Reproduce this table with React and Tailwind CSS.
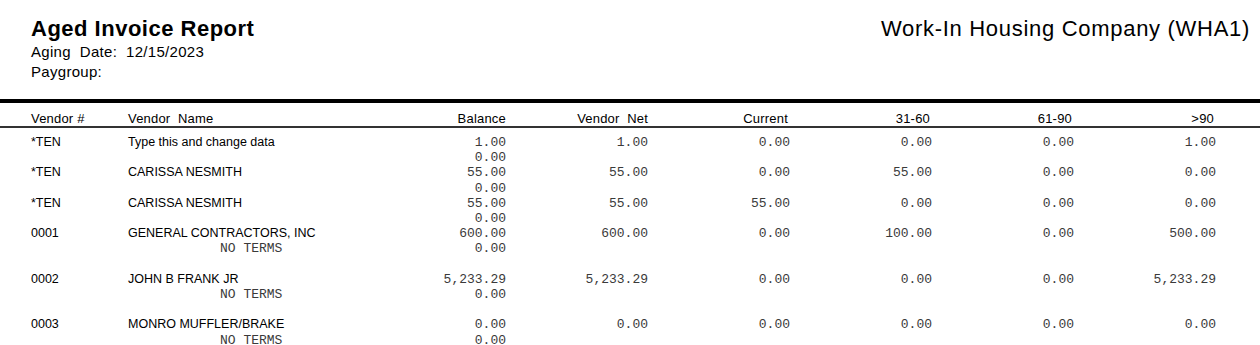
import React from "react";

const rows = [
    { id: "*TEN", name: "Type this and change data", terms: false, bal: "1.00", net: "1.00", cur: "0.00", d31: "0.00", d61: "0.00", d90: "1.00" },
    { id: "*TEN", name: "CARISSA NESMITH", terms: false, bal: "55.00", net: "55.00", cur: "0.00", d31: "55.00", d61: "0.00", d90: "0.00" },
    { id: "*TEN", name: "CARISSA NESMITH", terms: false, bal: "55.00", net: "55.00", cur: "55.00", d31: "0.00", d61: "0.00", d90: "0.00" },
    { id: "0001", name: "GENERAL CONTRACTORS, INC", terms: true, bal: "600.00", net: "600.00", cur: "0.00", d31: "100.00", d61: "0.00", d90: "500.00" },
    { id: "0002", name: "JOHN B FRANK JR", terms: true, bal: "5,233.29", net: "5,233.29", cur: "0.00", d31: "0.00", d61: "0.00", d90: "5,233.29" },
    { id: "0003", name: "MONRO MUFFLER/BRAKE", terms: true, bal: "0.00", net: "0.00", cur: "0.00", d31: "0.00", d61: "0.00", d90: "0.00" },
];

const cols = "grid grid-cols-[97px_250px_128px_142px_142px_142px_142px_142px] pl-[31px]";
const sans = "font-['Liberation_Sans',Arial,sans-serif]";
const mono = "font-['Liberation_Mono','Courier_New',monospace] text-[13px] text-[#3a3a3a] text-right";

const App = () => {
    return (
        <div className={`bg-white text-black min-h-screen w-[1260px] overflow-hidden ${sans}`}>

            {/* TITLE */}
            <div className="flex justify-between pt-[17px] pl-[31px] pr-[10px]">
                <div>
                    <h1 className="text-[22px] leading-[24px] font-bold tracking-[0.5px]">Aged Invoice Report</h1>
                    <p className="mt-[1px] text-[15px] leading-[20px] tracking-[0.3px] whitespace-pre">Aging  Date:  12/15/2023</p>
                    <p className="text-[15px] leading-[20px] tracking-[0.3px]">Paygroup:</p>
                </div>
                <div className="text-[22px] leading-[24px] tracking-[0.7px]">Work-In Housing Company (WHA1)</div>
            </div>

            <div className="mt-[17px] h-[4px] bg-black" />

            {/* HEADER */}
            <div className={`${cols} pt-[9px] pb-[1px] text-[13px] leading-[13px] tracking-[0.2px] whitespace-pre`}>
                <div>Vendor #</div>
                <div>Vendor  Name</div>
                <div className="text-right">Balance</div>
                <div className="text-right">Vendor  Net</div>
                <div className="text-right pr-[2px]">Current</div>
                <div className="text-right pr-[2px]">31-60</div>
                <div className="text-right pr-[2px]">61-90</div>
                <div className="text-right pr-[2px]">&gt;90</div>
            </div>
            <div className="h-[2px] bg-[#333]" />

            {/* ROWS */}
            <div className="mt-[7px] leading-[15.2px]">
                {rows.map((r, i) => (
                    <div key={i} className={r.terms ? "pb-[15.2px]" : ""}>
                        <div className={cols}>
                            <div className="text-[12.5px]">{r.id}</div>
                            <div className="text-[12.5px]">{r.name}</div>
                            <div className={mono}>{r.bal}</div>
                            <div className={mono}>{r.net}</div>
                            <div className={mono}>{r.cur}</div>
                            <div className={mono}>{r.d31}</div>
                            <div className={mono}>{r.d61}</div>
                            <div className={mono}>{r.d90}</div>
                        </div>
                        <div className={cols}>
                            <div />
                            <div className="font-['Liberation_Mono','Courier_New',monospace] text-[13px] text-[#3a3a3a] pl-[92px]">
                                {r.terms ? "NO TERMS" : ""}
                            </div>
                            <div className={mono}>0.00</div>
                        </div>
                    </div>
                ))}
            </div>
        </div>
    );
};

export default App;
